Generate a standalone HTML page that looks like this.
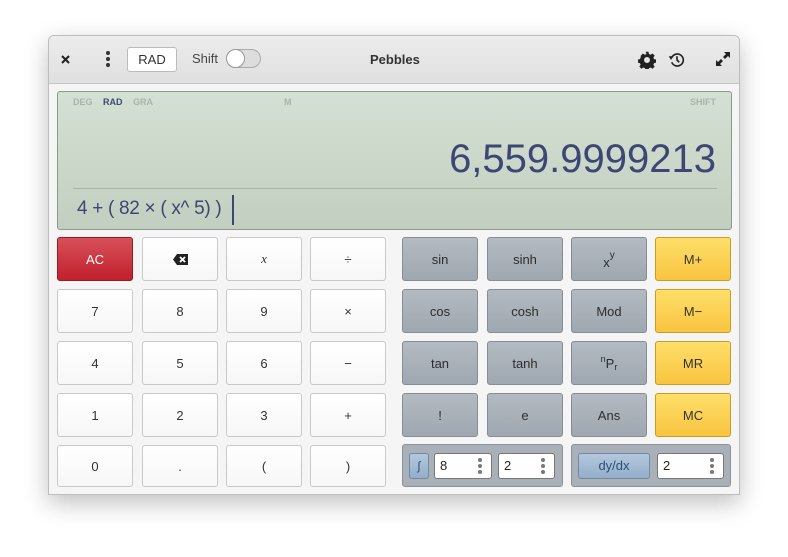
<!DOCTYPE html>
<html><head><meta charset="utf-8"><style>
*{box-sizing:border-box;margin:0;padding:0}
body{width:788px;height:557px;background:#fff;font-family:"Liberation Sans",sans-serif;position:relative;overflow:hidden}
.win{position:absolute;left:48px;top:35px;width:692px;height:460px;background:#f5f5f5;border:1px solid #bdbdbd;border-radius:6px 6px 0 0;box-shadow:0 8px 24px rgba(0,0,0,.25);overflow:hidden}
.hdr{position:absolute;left:0;top:0;width:690px;height:48px;background:linear-gradient(#ececec,#e0e0e0);border-bottom:1px solid #c4c4c4}
.a{position:absolute}
.disp{position:absolute;left:8px;top:55px;width:675px;height:139px;border:1px solid #8a9a8a;border-radius:3px;background:linear-gradient(#d4e0d3,#c2cfc0)}
.b{position:absolute;width:76px;height:44px;border:1px solid #c9c9c9;border-radius:3px;background:linear-gradient(#fff,#f7f7f7);font-size:13px;color:#333;display:flex;align-items:center;justify-content:center}
.g{background:linear-gradient(#b3bac1,#9fa7b0);border-color:#868d95;color:#2d2d2d}
.y{background:linear-gradient(#fedf6a,#f9c440);border-color:#c99d26;color:#333}
.r{background:linear-gradient(#d8505a,#c0202c);border-color:#9e1a22;color:#fff}
.p{position:absolute;background:#a9b0b8;border:1px solid #8c939b;border-radius:3px}
.sp{position:absolute;height:26px;background:#fff;border:1px solid #777;border-radius:3px;font-size:13px;padding:4px 5px;color:#222}
.dots{position:absolute;right:9px;top:4px;width:4px}
.dots i{display:block;width:4px;height:4px;border-radius:2px;background:#777;margin-bottom:2px}
</style></head><body>
<div class="win">
<div class="hdr">
<svg class="a" style="left:12px;top:19px" width="9" height="9" viewBox="0 0 9 9"><path stroke="#222" stroke-width="2" d="M1 1l7 7M8 1l-7 7"/></svg>
<div class="a" style="left:57px;top:15px;width:4px">
<div style="width:4px;height:4px;border-radius:2px;background:#333;margin-bottom:2px"></div><div style="width:4px;height:4px;border-radius:2px;background:#333;margin-bottom:2px"></div><div style="width:4px;height:4px;border-radius:2px;background:#333"></div></div>
<div class="a" style="left:78px;top:11px;width:50px;height:25px;border:1px solid #bbb;border-radius:3px;background:#fff;font-size:13px;text-align:center;line-height:23px;color:#333">RAD</div>
<div class="a" style="left:143px;top:15px;font-size:13px;color:#444">Shift</div>
<div class="a" style="left:177px;top:13px;width:35px;height:19px;border-radius:10px;background:#ddd;border:1px solid #aaa"></div>
<div class="a" style="left:177px;top:13px;width:19px;height:19px;border-radius:10px;background:#fff;border:1px solid #999"></div>
<div class="a" style="left:321px;top:16px;font-size:13px;font-weight:bold;color:#333">Pebbles</div>
<svg class="a" style="left:589px;top:15px" width="18" height="18" viewBox="0 0 24 24"><path fill="#222" d="M10 1h4l.6 3 2.2 1 2.6-1.7 2.8 2.8-1.7 2.6 1 2.2 3 .6v4l-3 .6-1 2.2 1.7 2.6-2.8 2.8-2.6-1.7-2.2 1-.6 3h-4l-.6-3-2.2-1-2.6 1.7-2.8-2.8 1.7-2.6-1-2.2-3-.6v-4l3-.6 1-2.2L3.8 6.1l2.8-2.8 2.6 1.7 2.2-1zM12 8a4 4 0 100 8 4 4 0 000-8z"/></svg>
<svg class="a" style="left:619px;top:15px" width="18" height="18" viewBox="0 0 24 24"><path fill="none" stroke="#222" stroke-width="2.2" d="M5 9a8 8 0 1 1 0 6M12 7v5l3 3"/><path fill="#222" d="M1 7l6 0-3 5z"/></svg>
<svg class="a" style="left:667px;top:16px" width="14" height="14" viewBox="0 0 14 14"><path fill="#222" d="M8 0h6v6l-2-2-3 3-2-2 3-3zM6 14H0V8l2 2 3-3 2 2-3 3z"/></svg>
</div>
<div class="disp">
<div class="a" style="left:15px;top:5px;font-size:9px;font-weight:bold;color:#a9b5a8">DEG</div>
<div class="a" style="left:45px;top:5px;font-size:9px;font-weight:bold;color:#3d4a70">RAD</div>
<div class="a" style="left:75px;top:5px;font-size:9px;font-weight:bold;color:#a9b5a8">GRA</div>
<div class="a" style="left:226px;top:5px;font-size:9px;font-weight:bold;color:#a9b5a8">M</div>
<div class="a" style="right:15px;top:5px;font-size:9px;font-weight:bold;color:#a9b5a8">SHIFT</div>
<div class="a" style="right:15px;top:45px;font-size:40px;color:#3d4674">6,559.9999213</div>
<div class="a" style="left:15px;top:96px;width:644px;height:1px;background:#a8b5a6"></div>
<div class="a" style="left:19px;top:106px;font-size:19px;color:#3d4674;letter-spacing:-0.3px">4 + ( 82 × ( x^ 5) )</div>
<div class="a" style="left:174px;top:103px;width:2px;height:30px;background:#3d4674"></div>
</div>
</div>
<div class="b r" style="left:57px;top:237px">AC</div>
<div class="b" style="left:142px;top:237px"><svg width="15" height="11" viewBox="0 0 15 11"><path fill="#222" d="M4 0h11v11H4L0 5.5z"/><path stroke="#fff" stroke-width="1.8" d="M7 3l5 5M12 3l-5 5"/></svg></div>
<div class="b" style="left:226px;top:237px;font-family:'Liberation Serif',serif;font-style:italic">x</div>
<div class="b" style="left:310px;top:237px">÷</div>
<div class="b" style="left:57px;top:289px">7</div><div class="b" style="left:142px;top:289px">8</div><div class="b" style="left:226px;top:289px">9</div><div class="b" style="left:310px;top:289px">×</div>
<div class="b" style="left:57px;top:341px">4</div><div class="b" style="left:142px;top:341px">5</div><div class="b" style="left:226px;top:341px">6</div><div class="b" style="left:310px;top:341px">−</div>
<div class="b" style="left:57px;top:393px">1</div><div class="b" style="left:142px;top:393px">2</div><div class="b" style="left:226px;top:393px">3</div><div class="b" style="left:310px;top:393px">+</div>
<div class="b" style="left:57px;top:445px;height:42px">0</div><div class="b" style="left:142px;top:445px;height:42px">.</div><div class="b" style="left:226px;top:445px;height:42px">(</div><div class="b" style="left:310px;top:445px;height:42px">)</div>
<div class="b g" style="left:402px;top:237px">sin</div><div class="b g" style="left:487px;top:237px">sinh</div><div class="b g" style="left:571px;top:237px"><span style="position:relative;top:3px">x</span><span style="font-size:10px;position:relative;top:-4px">y</span></div><div class="b y" style="left:655px;top:237px">M+</div>
<div class="b g" style="left:402px;top:289px">cos</div><div class="b g" style="left:487px;top:289px">cosh</div><div class="b g" style="left:571px;top:289px">Mod</div><div class="b y" style="left:655px;top:289px">M−</div>
<div class="b g" style="left:402px;top:341px">tan</div><div class="b g" style="left:487px;top:341px">tanh</div><div class="b g" style="left:571px;top:341px"><span style="font-size:9px;position:relative;top:-4px">n</span><span>P</span><span style="font-size:9px;position:relative;top:4px">r</span></div><div class="b y" style="left:655px;top:341px">MR</div>
<div class="b g" style="left:402px;top:393px">!</div><div class="b g" style="left:487px;top:393px">e</div><div class="b g" style="left:571px;top:393px">Ans</div><div class="b y" style="left:655px;top:393px">MC</div>
<div class="p" style="left:402px;top:444px;width:161px;height:43px"></div>
<div class="p" style="left:571px;top:444px;width:160px;height:43px"></div>
<div class="a" style="left:409px;top:453px;width:20px;height:26px;border:1px solid #6f8aa5;border-radius:3px;background:linear-gradient(#b4c8dc,#93aecb);font-size:12px;color:#2d4f78;text-align:center;line-height:24px">∫</div>
<div class="sp" style="left:434px;top:453px;width:58px">8<div class="dots"><i></i><i></i><i></i></div></div>
<div class="sp" style="left:498px;top:453px;width:57px">2<div class="dots"><i></i><i></i><i></i></div></div>
<div class="a" style="left:578px;top:453px;width:72px;height:26px;border:1px solid #6f8aa5;border-radius:3px;background:linear-gradient(#b4c8dc,#93aecb);font-size:13px;color:#2d4f78;text-align:center;line-height:24px">dy/dx</div>
<div class="sp" style="left:657px;top:453px;width:67px">2<div class="dots"><i></i><i></i><i></i></div></div>
</body></html>
